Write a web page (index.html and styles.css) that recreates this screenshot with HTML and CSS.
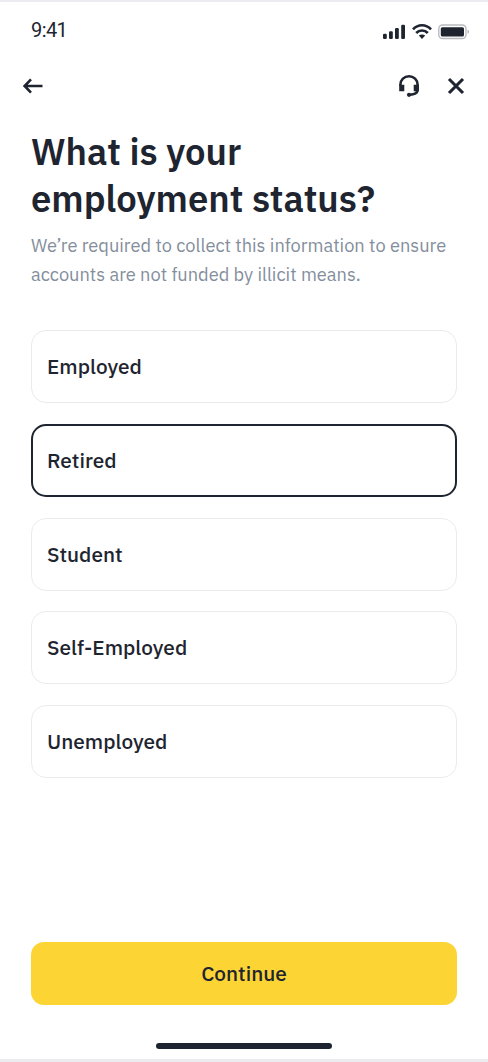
FILE: index.html
```html
<!DOCTYPE html>
<html lang="en">
<head>
<meta charset="utf-8">
<title>Employment status</title>
<link rel="stylesheet" href="styles.css">
</head>
<body>
<main class="screen">
  <div class="status-bar">
    <span class="time">9:41</span>
    <div class="indicators">
      <svg class="signal" width="23" height="16" viewBox="0 0 23 16"><rect x="0" y="9.8" width="3.8" height="5.200" rx="1.2"/><rect x="6" y="7.2" width="3.8" height="7.8" rx="1.2"/><rect x="12" y="4" width="3.8" height="11" rx="1.2"/><rect x="18.2" y="0.8" width="3.800" height="14.2" rx="1.2"/></svg>
      <svg class="wifi" width="20" height="16" viewBox="0 0 20 16"><path class="arc" d="M1 5.4C6-.1 14-.1 19 5.4M4.2 9C7.3 5.6 12.700 5.600 15.800 9"/><path d="M6.800 11.600C8.600 10 11.400 10 13.200 11.600L10 14.900Z"/></svg>
      <svg class="battery" width="32" height="16" viewBox="0 0 32 16"><rect class="case" x=".8" y="1" width="27.200" height="13.500" rx="3.800"/><rect x="2.800" y="3.200" width="23.200" height="9.200" rx="1.500"/><path class="cap" d="M29.500 5.700C31.500 6 31.500 9.500 29.500 9.800Z"/></svg>
    </div>
  </div>
  <nav class="nav">
    <button class="icon-button" aria-label="Back"><svg width="22" height="18" viewBox="0 0 22 18"><path class="line" d="M20.500 9H3M9 2.300 2.600 9 9 15.700"/></svg></button>
    <div class="nav-actions">
      <button class="icon-button" aria-label="Support"><svg width="22" height="24" viewBox="0 0 22 24"><path class="line" d="M2.400 12V10.700a8.600 8.500 0 0 1 17.200 0V15c0 3-2 4.800-4.600 5.200l-4 .8"/><path d="M1.200 10.800H6.300V17.300H1.200ZM15.700 10.800H20.800V17.300H15.700Z"/><circle cx="11" cy="20.800" r="2.100"/></svg></button>
      <button class="icon-button" aria-label="Close"><svg width="18" height="18" viewBox="0 0 18 18"><path class="line heavy" d="M2 2 16 16M16 2 2 16"/></svg></button>
    </div>
  </nav>
  <header class="intro">
    <h1 class="title">What is your<br>employment status?</h1>
    <p class="description">We’re required to collect this information to ensure<br>accounts are not funded by illicit means.</p>
  </header>
  <div class="options">
    <button class="option">Employed</button>
    <button class="option selected">Retired</button>
    <button class="option">Student</button>
    <button class="option">Self-Employed</button>
    <button class="option">Unemployed</button>
  </div>
  <footer class="footer">
    <button class="continue">Continue</button>
    <div class="home-indicator"></div>
  </footer>
</main>
</body>
</html>
```
FILE: styles.css
```css
* { box-sizing: border-box; }
body { margin: 0; background: #fff; }
button { font: inherit; color: inherit; border: 0; background: none; padding: 0; }
svg { display: block; fill: currentColor; overflow: visible; }
.screen {
  height: 1062px;
  display: flex;
  flex-direction: column;
  border-top: 2px solid #ebebf0;
  border-bottom: 3px solid #ebebf0;
  color: #1e2530;
  background: #fff;
  font-family: "IBM Plex Sans", Inter, sans-serif;
}
.status-bar {
  height: 57px;
  padding: 0 18px 0 31px;
  display: flex;
  align-items: center;
  justify-content: space-between;
}
.time { font: 400 20px/24px Roboto, sans-serif; letter-spacing: -.6px; padding-bottom: 2px; }
.indicators { display: flex; gap: 6px; padding-top: 2px; }
.arc { fill: none; stroke: currentColor; stroke-width: 2.600; }
.case { fill: none; stroke: #b9bbc0; stroke-width: 1.400; }
.cap { fill: #b9bbc0; }
.nav {
  height: 54.400px;
  padding: 0 23px 0 22px;
  display: flex;
  align-items: center;
  justify-content: space-between;
}
.nav-actions { display: flex; align-items: center; gap: 27px; }
.line { fill: none; stroke: currentColor; stroke-width: 2.600; }
.heavy { stroke-width: 3.100; }
.intro { height: 216.600px; padding: 14.600px 31px 0; }
.title { margin: 0; font-size: 36.450px; font-weight: 600; line-height: 47px; white-space: nowrap; }
.description { margin: 9px 0 0; font-size: 18.250px; line-height: 28.700px; color: #848e9c; white-space: nowrap; }
.options { display: flex; flex-direction: column; gap: 20.840px; padding: 0 31px; }
.option {
  height: 73px;
  padding: 0 15px;
  border: 1px solid #eaebed;
  border-radius: 15px;
  text-align: left;
  font-size: 20.800px;
  font-weight: 500;
}
.selected { border: 2px solid #1e2530; padding: 0 14px; }
.footer { margin-top: auto; padding: 0 31px 10px; display: flex; flex-direction: column; align-items: center; gap: 38px; }
.continue { width: 100%; height: 63px; border-radius: 13px; background: #fcd535; font-size: 20.800px; font-weight: 500; }
.home-indicator { width: 176px; height: 6px; border-radius: 3px; background: #1e2530; }
```
